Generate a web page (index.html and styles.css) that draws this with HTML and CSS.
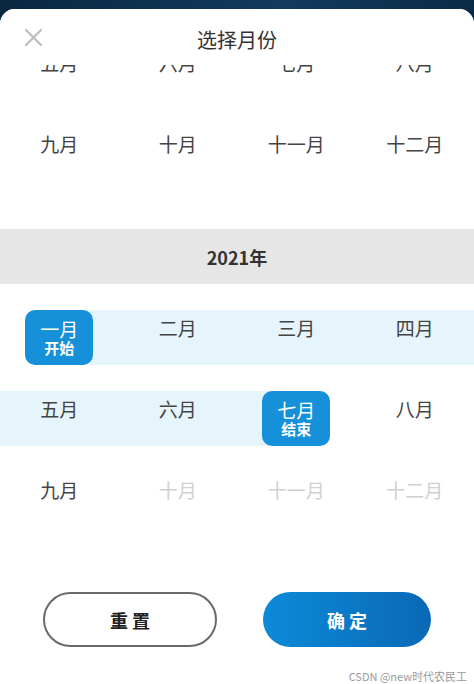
FILE: index.html
```html
<!DOCTYPE html>
<html lang="zh-CN">
<head>
<meta charset="utf-8">
<title>选择月份</title>
<link rel="stylesheet" href="styles.css">
</head>
<body>
<div class="backdrop">
  <div class="sheet">
    <header class="sheet-header">
      <div class="close">
        <svg width="19" height="19" viewBox="0 0 19 19"><path d="M2 2 L17 17 M17 2 L2 17" stroke="#bdbdbd" stroke-width="2.2" stroke-linecap="round" fill="none"/></svg>
      </div>
      <div class="title">选择月份</div>
      <div></div>
    </header>
    <div class="viewport">
      <div class="scroll-inner">
        <section class="year-block year-prev">
          <div class="month-row">
            <div class="cell"><span class="label">五月</span></div>
            <div class="cell"><span class="label">六月</span></div>
            <div class="cell"><span class="label">七月</span></div>
            <div class="cell"><span class="label">八月</span></div>
          </div>
          <div class="month-row">
            <div class="cell"><span class="label">九月</span></div>
            <div class="cell"><span class="label">十月</span></div>
            <div class="cell"><span class="label">十一月</span></div>
            <div class="cell"><span class="label">十二月</span></div>
          </div>
        </section>
        <section class="year-block">
          <div class="year-title">2021年</div>
          <div class="month-row">
            <div class="cell range-start"><div class="chip"><span class="chip-month">一月</span><span class="chip-tag">开始</span></div></div>
            <div class="cell in-range"><span class="label">二月</span></div>
            <div class="cell in-range"><span class="label">三月</span></div>
            <div class="cell in-range"><span class="label">四月</span></div>
          </div>
          <div class="month-row">
            <div class="cell in-range"><span class="label">五月</span></div>
            <div class="cell in-range"><span class="label">六月</span></div>
            <div class="cell range-end"><div class="chip"><span class="chip-month">七月</span><span class="chip-tag">结束</span></div></div>
            <div class="cell"><span class="label">八月</span></div>
          </div>
          <div class="month-row">
            <div class="cell"><span class="label">九月</span></div>
            <div class="cell disabled"><span class="label">十月</span></div>
            <div class="cell disabled"><span class="label">十一月</span></div>
            <div class="cell disabled"><span class="label">十二月</span></div>
          </div>
        </section>
      </div>
    </div>
    <footer class="sheet-footer">
      <div class="actions">
        <button class="btn btn-reset">重 置</button>
        <button class="btn btn-ok">确 定</button>
      </div>
      <div class="watermark">CSDN @new时代农民工</div>
    </footer>
  </div>
</div>
</body>
</html>
```
FILE: styles.css
```css
* { box-sizing: border-box; }
html, body { margin: 0; padding: 0; }
body {
  width: 474px;
  height: 684px;
  overflow: hidden;
  font-family: "Noto Sans CJK SC", "Noto Sans", sans-serif;
  background: #0c2c47;
}
.backdrop {
  height: 684px;
  padding-top: 9px;
  background: linear-gradient(to right, #0a2740, #123b5e 60%, #0b2a45);
}
.sheet {
  height: 675px;
  background: #fff;
  border-radius: 15px 15px 0 0;
  display: flex;
  flex-direction: column;
  overflow: hidden;
}
.sheet-header {
  position: relative;
  z-index: 1;
  height: 56px;
  padding-top: 5px;
  display: grid;
  grid-template-columns: 1fr auto 1fr;
  align-items: center;
  background: #fff;
}
.close {
  padding-left: 24px;
  display: flex;
  align-items: center;
  margin-top: -4px;
}
.close svg { display: block; }
.title {
  font-size: 20px;
  color: #333;
  line-height: 26px;
}
.viewport {
  flex: 1;
  overflow: hidden;
}
.scroll-inner {
  margin-top: -46px;
}
.year-block {
  padding-bottom: 58px;
}
.year-prev {
  padding-bottom: 48px;
}
.year-title {
  height: 55px;
  background: #e6e6e6;
  display: flex;
  align-items: center;
  justify-content: center;
  font-weight: 700;
  font-size: 18px;
  color: #333;
}
.month-row {
  display: grid;
  grid-template-columns: repeat(4, 1fr);
  height: 55px;
  margin-top: 26px;
}
.cell {
  display: flex;
  align-items: center;
  justify-content: center;
}
.label {
  font-size: 19px;
  color: #444;
  line-height: 24px;
  padding-bottom: 20px;
}
.disabled .label { color: #d0d0d0; }
.in-range { background: #e6f4fc; }
.range-start { background: linear-gradient(to right, transparent 50%, #e6f4fc 50%); }
.range-end { background: linear-gradient(to right, #e6f4fc 50%, transparent 50%); }
.chip {
  width: 68px;
  height: 55px;
  border-radius: 10px;
  background: #1690d9;
  color: #fff;
  display: flex;
  flex-direction: column;
  align-items: center;
  justify-content: center;
}
.chip-month {
  font-size: 19px;
  line-height: 20px;
}
.chip-tag {
  font-size: 15px;
  font-weight: 700;
  line-height: 18px;
}
.sheet-footer {
  height: 118px;
  padding-top: 26px;
  background: #fff;
}
.actions {
  display: flex;
  padding-left: 43px;
  gap: 46px;
}
.btn {
  height: 55px;
  border-radius: 28px;
  font-family: "Noto Sans CJK SC", sans-serif;
  font-size: 18px;
  font-weight: 700;
  cursor: pointer;
}
.btn-reset {
  width: 174px;
  border: 2px solid #6a6a6a;
  background: #fff;
  color: #222;
}
.btn-ok {
  width: 168px;
  border: none;
  background: linear-gradient(to right, #0c8bd8, #0a68b6);
  color: #fff;
}
.watermark {
  margin-top: 22px;
  padding-right: 7px;
  text-align: right;
  font-size: 11px;
  line-height: 14px;
  color: #9a9a9a;
}
```
